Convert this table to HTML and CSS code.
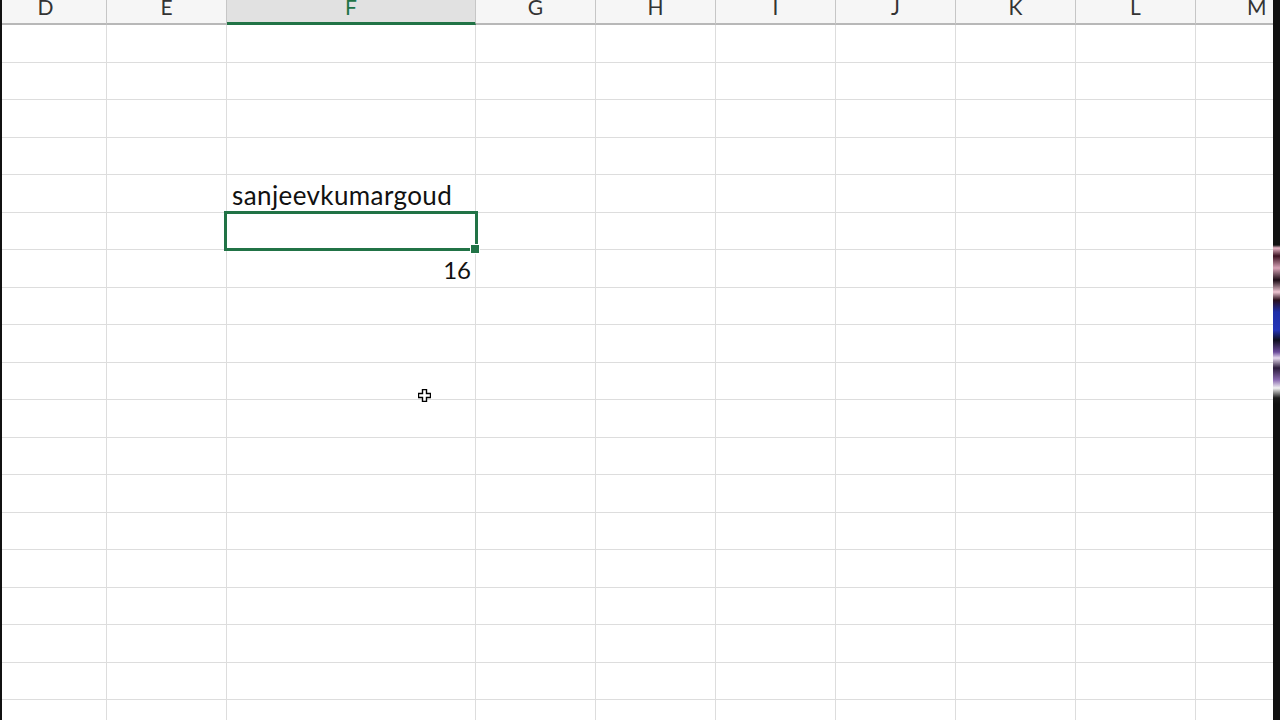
FILE: index.html
```html
<!DOCTYPE html>
<html>
<head>
<meta charset="utf-8">
<link rel="stylesheet" href="styles.css">
</head>
<body>
<div class="frame">
  <div class="edge-left"></div>
  <div class="sheet">
    <div class="head">
      <div class="hc first">D</div>
      <div class="hc">E</div>
      <div class="hc sel">F</div>
      <div class="hc">G</div>
      <div class="hc">H</div>
      <div class="hc">I</div>
      <div class="hc">J</div>
      <div class="hc">K</div>
      <div class="hc">L</div>
      <div class="hc last">M</div>
    </div>
    <div class="grid">
      <!-- row 1 -->
      <div class="c"></div><div class="c"></div><div class="c"></div><div class="c"></div><div class="c"></div><div class="c"></div><div class="c"></div><div class="c"></div><div class="c"></div><div class="c"></div>
      <!-- row 2 -->
      <div class="c"></div><div class="c"></div><div class="c"></div><div class="c"></div><div class="c"></div><div class="c"></div><div class="c"></div><div class="c"></div><div class="c"></div><div class="c"></div>
      <!-- row 3 -->
      <div class="c"></div><div class="c"></div><div class="c"></div><div class="c"></div><div class="c"></div><div class="c"></div><div class="c"></div><div class="c"></div><div class="c"></div><div class="c"></div>
      <!-- row 4 -->
      <div class="c"></div><div class="c"></div><div class="c"></div><div class="c"></div><div class="c"></div><div class="c"></div><div class="c"></div><div class="c"></div><div class="c"></div><div class="c"></div>
      <!-- row 5 -->
      <div class="c"></div><div class="c"></div><div class="c text">sanjeevkumargoud</div><div class="c"></div><div class="c"></div><div class="c"></div><div class="c"></div><div class="c"></div><div class="c"></div><div class="c"></div>
      <!-- row 6 -->
      <div class="c"></div><div class="c"></div><div class="c active"><span class="handle"></span></div><div class="c"></div><div class="c"></div><div class="c"></div><div class="c"></div><div class="c"></div><div class="c"></div><div class="c"></div>
      <!-- row 7 -->
      <div class="c"></div><div class="c"></div><div class="c num">16</div><div class="c"></div><div class="c"></div><div class="c"></div><div class="c"></div><div class="c"></div><div class="c"></div><div class="c"></div>
      <!-- row 8 -->
      <div class="c"></div><div class="c"></div><div class="c"></div><div class="c"></div><div class="c"></div><div class="c"></div><div class="c"></div><div class="c"></div><div class="c"></div><div class="c"></div>
      <!-- row 9 -->
      <div class="c"></div><div class="c"></div><div class="c"></div><div class="c"></div><div class="c"></div><div class="c"></div><div class="c"></div><div class="c"></div><div class="c"></div><div class="c"></div>
      <!-- row 10 -->
      <div class="c"></div><div class="c"></div><div class="c"><svg class="cursor" width="13" height="13" viewBox="0 0 13 13"><path d="M4.5 0.5h4v4h4v4h-4v4h-4v-4h-4v-4h4z" fill="#fff" stroke="#000" stroke-width="1.4"/></svg></div><div class="c"></div><div class="c"></div><div class="c"></div><div class="c"></div><div class="c"></div><div class="c"></div><div class="c"></div>
      <!-- row 11 -->
      <div class="c"></div><div class="c"></div><div class="c"></div><div class="c"></div><div class="c"></div><div class="c"></div><div class="c"></div><div class="c"></div><div class="c"></div><div class="c"></div>
      <!-- row 12 -->
      <div class="c"></div><div class="c"></div><div class="c"></div><div class="c"></div><div class="c"></div><div class="c"></div><div class="c"></div><div class="c"></div><div class="c"></div><div class="c"></div>
      <!-- row 13 -->
      <div class="c"></div><div class="c"></div><div class="c"></div><div class="c"></div><div class="c"></div><div class="c"></div><div class="c"></div><div class="c"></div><div class="c"></div><div class="c"></div>
      <!-- row 14 -->
      <div class="c"></div><div class="c"></div><div class="c"></div><div class="c"></div><div class="c"></div><div class="c"></div><div class="c"></div><div class="c"></div><div class="c"></div><div class="c"></div>
      <!-- row 15 -->
      <div class="c"></div><div class="c"></div><div class="c"></div><div class="c"></div><div class="c"></div><div class="c"></div><div class="c"></div><div class="c"></div><div class="c"></div><div class="c"></div>
      <!-- row 16 -->
      <div class="c"></div><div class="c"></div><div class="c"></div><div class="c"></div><div class="c"></div><div class="c"></div><div class="c"></div><div class="c"></div><div class="c"></div><div class="c"></div>
      <!-- row 17 -->
      <div class="c"></div><div class="c"></div><div class="c"></div><div class="c"></div><div class="c"></div><div class="c"></div><div class="c"></div><div class="c"></div><div class="c"></div><div class="c"></div>
      <!-- row 18 -->
      <div class="c"></div><div class="c"></div><div class="c"></div><div class="c"></div><div class="c"></div><div class="c"></div><div class="c"></div><div class="c"></div><div class="c"></div><div class="c"></div>
      <!-- row 19 -->
      <div class="c"></div><div class="c"></div><div class="c"></div><div class="c"></div><div class="c"></div><div class="c"></div><div class="c"></div><div class="c"></div><div class="c"></div><div class="c"></div>
      <!-- row 20 -->
      <div class="c"></div><div class="c"></div><div class="c"></div><div class="c"></div><div class="c"></div><div class="c"></div><div class="c"></div><div class="c"></div><div class="c"></div><div class="c"></div>
    </div>
  </div>
  <div class="edge-right"></div>
</div>
</body>
</html>
```

FILE: styles.css
```css
html, body {
  margin: 0;
  padding: 0;
  background: #000;
  overflow: hidden;
}

.frame {
  display: flex;
  width: 1280px;
  height: 720px;
  overflow: hidden;
}

.edge-left {
  width: 2px;
  flex: none;
  background: #111;
}

.edge-right {
  width: 7px;
  flex: none;
  background:
    linear-gradient(180deg,
      #111 0, #111 245px,
      #e9b7c8 248px, #3a1020 256px, #d9a4b8 268px, #1a0a14 280px,
      #f0c6d3 292px, #2a0f1c 300px, #1f2fa8 312px, #2535b8 330px,
      #0e0e1e 340px, #6a4a9a 352px, #e6d9ee 358px, #2a1a3a 368px,
      #8a6ab0 380px, #f2f2f2 388px, #1a1a1a 398px, #111 404px, #111 100%);
}

.sheet {
  flex: 1;
  background: #fff;
  display: flex;
  flex-direction: column;
  font-family: "Lato", "Liberation Sans", sans-serif;
}

.head {
  display: grid;
  grid-template-columns: 105px 120px 249px repeat(6, 120px) 1fr;
  height: 25px;
  flex: none;
  background: #f6f6f6;
}

.hc {
  box-sizing: border-box;
  height: 25px;
  border-right: 1px solid #c6c6c6;
  border-bottom: 2px solid #b8b8b8;
  display: flex;
  justify-content: center;
  align-items: flex-end;
  font-size: 21px;
  line-height: 20px;
  color: #333;
  overflow: hidden;
  padding-bottom: 6px;
}

.hc.first {
  padding-right: 17px;
}

.hc.sel {
  background: #e1e1e1;
  border-bottom: 3px solid #217346;
  color: #217346;
  padding-bottom: 5px;
}

.hc.last {
  border-right: none;
  justify-content: flex-start;
  padding-left: 51px;
}

.grid {
  display: grid;
  grid-template-columns: 105px 120px 249px repeat(6, 120px) 1fr;
  grid-auto-rows: 37.5px;
}

.c {
  box-sizing: border-box;
  border-right: 1px solid #dddddd;
  border-bottom: 1px solid #dddddd;
  position: relative;
  font-size: 26px;
  color: #111;
}

.c:nth-child(10n) {
  border-right: none;
}

.text {
  display: flex;
  align-items: flex-end;
  padding-left: 5px;
  padding-bottom: 1.5px;
  line-height: 30px;
  white-space: nowrap;
  letter-spacing: 0.4px;
}

.num {
  display: flex;
  align-items: flex-end;
  justify-content: flex-end;
  padding-right: 4px;
  padding-bottom: 1.5px;
  line-height: 30px;
  font-size: 24px;
}

.active::before {
  content: "";
  position: absolute;
  left: -3px;
  top: -2px;
  right: -3px;
  bottom: -2px;
  border: 3px solid #217346;
  z-index: 2;
}

.handle {
  position: absolute;
  right: -5px;
  bottom: -5px;
  width: 8px;
  height: 8px;
  background: #217346;
  border: 1px solid #fff;
  z-index: 3;
}

.cursor {
  position: absolute;
  left: 191px;
  top: 26px;
  z-index: 4;
}
```
